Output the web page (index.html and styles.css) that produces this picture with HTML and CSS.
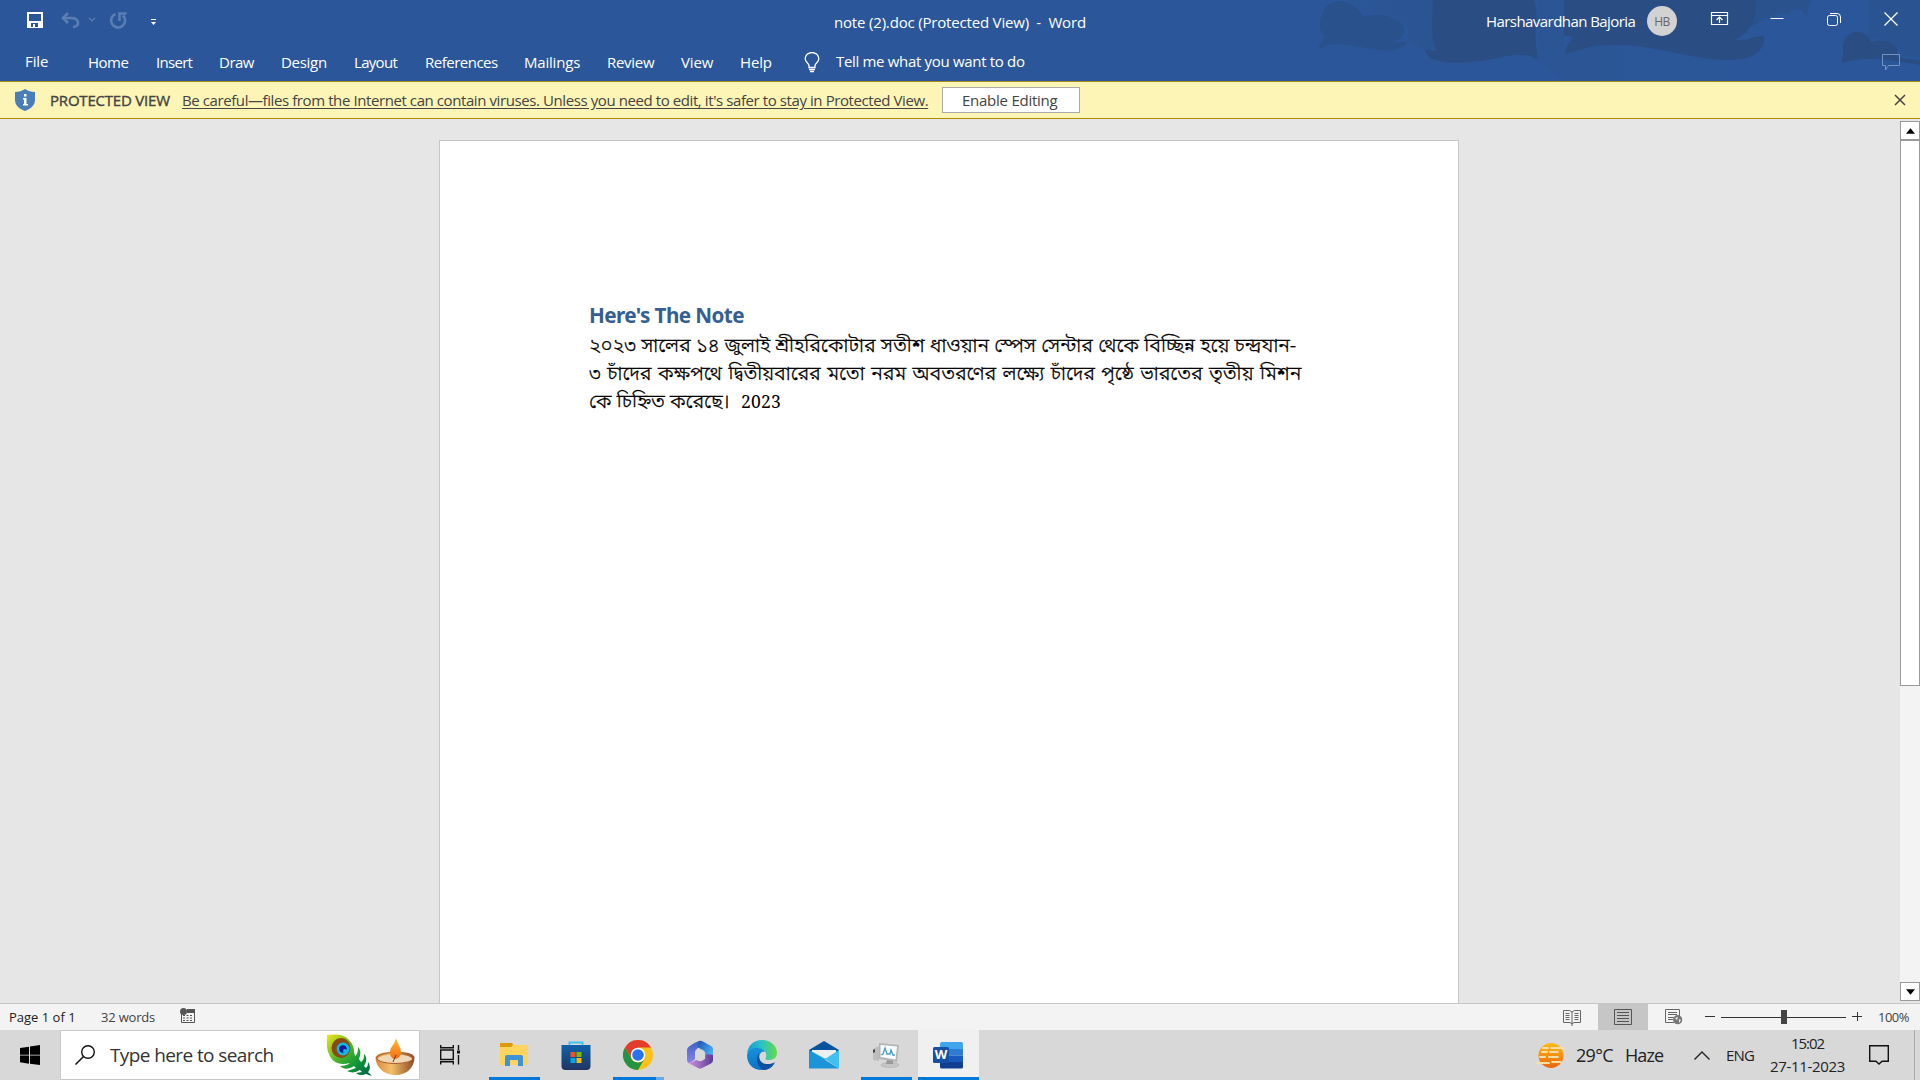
FILE: index.html
```html
<!DOCTYPE html>
<html lang="en">
<head>
<meta charset="utf-8">
<title>note (2).doc - Word</title>
<link rel="stylesheet" href="styles.css">
</head>
<body>
<header class="ribbon">
  <svg class="art" viewBox="1300 0 620 81">
    <defs>
      <linearGradient id="a1"><stop stop-color="#2a4e84" stop-opacity=".75"/><stop offset="1" stop-color="#2a4e84" stop-opacity=".3"/></linearGradient>
      <linearGradient id="a2"><stop stop-color="#2a4e84" stop-opacity=".2"/><stop offset="1" stop-color="#2a4e84" stop-opacity=".9"/></linearGradient>
    </defs>
    <path fill="url(#a2)" opacity=".45" d="M1345 0h95v50l-20-2-12-8c2-12-2-24-24-26-12 2-24-6-39-14z"/>
    <g fill="#2a4e84">
      <path opacity=".7" d="M1320 26c0-14 8-25 18-25 14 0 20 8 26 16 16-5 34 0 39 9 3 6 0 13-10 16 6 2 11-2 14 0-2 7-13 9-28 8-20-2-44-11-60-1 0-6 4-9 6-12-3-3-5-7-5-11z"/>
      <path d="M1433 0h101c6 12 0 30 2 45l2 15c-18-12-40 0-58 1-22 3-52 4-55-11 4-2 8 2 12 0-8-16-4-34-4-50z"/>
      <path d="M1564 0h191c3 18-6 34-20 40 12 2 22-6 29-4 3 11-9 22-23 23-27 4-56-5-86-10-34-6-62-6-90 6 0-7 2-9 6-15 3-3-2-4-7-5z"/>
      <path opacity=".6" d="M1755 0h56c-3 7-4 13-4 18-4-10-14-12-19-4-12-3-25 5-39 14 4-9 6-18 6-28z"/>
      <path d="M1844 54c-4-12 3-22 13-22 8 0 12 5 14 10 14-4 25 1 27 9-3 4 4 8 10 8l12 1v5c-26-4-52-10-78-2 0-5 1-7 2-9z"/>
      <path opacity=".4" d="M1868 0h52v58l-18-2c-2-14-16-16-34-18 2-14 4-26 0-38z"/>
    </g>
    <path fill="url(#a1)" opacity=".3" d="M1538 0h26v55c26-10 60-12 92-4l66 10v20h-160l-24-22z"/>
  </svg>
  <div class="titlebar">
    <svg class="quick" viewBox="0 0 170 41">
      <path fill="#fff" fill-rule="evenodd" d="M27 12h16v16H27zM29 14v7h12v-7zM31 23v4h2v-3h2v3h3v-4z"/>
      <g fill="none" stroke="#5b7eb5" stroke-width="2.6"><path d="M68 13l-5 5 5 5M63 18h8c9 0 9 9 2 9"/><path d="M115.500 14a7 7 0 1 0 7.500 1.500M119.500 21v-7.500h7" /><path stroke-width="1.2" d="M89 18l3 3 3-3"/></g>
      <path fill="#fff" d="M151 19h5v1h-5zM151 22h5l-2.5 3z"/>
    </svg>
    <div class="title">note (2).doc (Protected View)&nbsp; -&nbsp; Word</div>
    <div class="user">Harshavardhan Bajoria</div>
    <div class="avatar">HB</div>
    <svg class="wincontrols" viewBox="1690 0 230 41" fill="none" stroke="#fff">
      <path d="M1711.500 12.500h16v12h-16zM1711.500 15.500h16M1719.500 23v-6M1716.500 20l3-3 3 3" stroke-width="1.2"/>
      <path d="M1770.500 18.500h13"/>
      <rect x="1827.500" y="15.500" width="10" height="10" rx="2"/><path d="M1830 13.500h7q3.500 0 3.500 3.500v6"/>
      <path stroke-width="1.300" d="M1884.500 12.500l13 13M1897.500 12.500l-13 13"/>
    </svg>
  </div>
  <nav class="tabs">
    <span class="file">File</span><span>Home</span><span class="tight">Insert</span><span>Draw</span><span>Design</span><span class="tight">Layout</span><span>References</span><span>Mailings</span><span>Review</span><span class="loose">View</span><span class="loose">Help</span>
    <svg class="bulb" viewBox="0 0 16 21" fill="none" stroke="#fff" stroke-width="1.300"><path d="M5 15.500v-2C4.500 11 1.200 10 1.200 6.800a6.800 6.300 0 0 1 13.600 0C14.800 10 11.500 11 11 13.500v2zM5 17.500h6M6 19.500h4"/></svg>
    <span class="tell">Tell me what you want to do</span>
    <svg class="comment" viewBox="0 0 20 18"><path fill="none" stroke="#7592c0" d="M1.500.5h17v11h-11l-3 4.500v-4.500h-3z"/></svg>
  </nav>
</header>
<div class="protected">
  <svg class="shield" viewBox="0 0 20 22"><path fill="#4a7ebb" d="M10 0c3 2 6 3 10 3v8c0 6-5 9-10 11C5 20 0 17 0 11V3c4 0 7-1 10-3z"/><path fill="#fff" d="M9 5h2.500v2.500H9zM8 9h3.500v6H13v1.500H8V15h1v-4.500H8z"/></svg>
  <span class="pv">PROTECTED VIEW</span>
  <span class="warn">Be careful—files from the Internet can contain viruses. Unless you need to edit, it's safer to stay in Protected View.</span>
  <span class="enable">Enable Editing</span>
  <svg class="dismiss" viewBox="0 0 12 12"><path stroke="#444" stroke-width="1.500" d="M1 1l10 10M11 1L1 11"/></svg>
</div>
<main class="workspace">
  <article class="page">
    <h1>Here's The Note</h1>
    <p class="l1">২০২৩ সালের ১৪ জুলাই শ্রীহরিকোটার সতীশ ধাওয়ান স্পেস সেন্টার থেকে বিচ্ছিন্ন হয়ে চন্দ্রযান-</p>
    <p class="l2">৩ চাঁদের কক্ষপথে দ্বিতীয়বারের মতো নরম অবতরণের লক্ষ্যে চাঁদের পৃষ্ঠে ভারতের তৃতীয় মিশন</p>
    <p class="l3"><span>কে চিহ্নিত করেছে।</span><span class="year">2023</span></p>
  </article>
  <div class="scroll">
    <div class="btn"><svg viewBox="0 0 8 5"><path d="M4 0l4 5H0z"/></svg></div>
    <div class="thumb"></div>
    <div class="btn end"><svg viewBox="0 0 8 5"><path d="M4 5l4-5H0z"/></svg></div>
  </div>
</main>
<footer class="status">
  <span class="pages">Page 1 of 1</span><span class="words">32 words</span>
  <svg class="macro" viewBox="0 0 16 16"><path fill="none" stroke="#555" d="M1.500 5v9.500h13v-13H8"/><path fill="#555" d="M7 1h8v4H7z"/><circle cx="3.500" cy="3.500" r="3.500" fill="#555"/><path stroke="#555" stroke-dasharray="2 1.500" d="M3 7.500h10M3 10h10M3 12.500h10"/></svg>
  <svg class="view read" viewBox="0 0 18 17" fill="none" stroke="#666"><path d="M.5 1.500h6L9 3l2.500-1.500h6v12H11L9 15l-2-1.500H.5zM9 3v14M2.500 4.500h4M2.500 6.500h4M2.500 8.500h4M2.500 10.500h4M11.500 4.500h4M11.500 6.500h4M11.500 8.500h4M11.500 10.500h4"/></svg>
  <div class="view print"><svg viewBox="0 0 18 17" fill="none" stroke="#555"><path d="M.5.500h17v15H.500zM3 3.500h12M3 6.500h12M3 9.500h12M3 12.500h12"/></svg></div>
  <svg class="view web" viewBox="0 0 18 17"><path fill="none" stroke="#666" d="M9 13.500H.5V.500h14V7M3 3.500h9M3 5.500h9M3 8.500h6M3 10.500h5"/><circle cx="12.700" cy="10.700" r="4.600" fill="#777"/><path fill="#eee" d="M10 9l3-1-1 3zM14 10l2 1-2 3z"/></svg>
  <svg class="zoom" viewBox="0 0 160 26"><path fill="none" stroke="#333" d="M3 12.500h10M19 13.500h125M150 12.500h10M155.500 8v9"/><path fill="#444" d="M79 6h6v14h-6z"/></svg>
  <span class="pct">100%</span>
</footer>
<div class="taskbar">
  <div class="start"><svg viewBox="0 0 20 20"><path d="M0 3l9-1.300v8H0zM10 1.500L20 0v9.700H10zM0 10.500h9v8.200L0 17.300zM10 10.500h10V20l-10-1.300z"/></svg></div>
  <div class="search">
    <svg class="glass" viewBox="0 0 20 20"><circle cx="13" cy="7" r="6.300" fill="none" stroke="#111" stroke-width="1.400"/><path stroke="#111" stroke-width="1.500" d="M8.500 11.500L.5 19.500"/></svg>
    <span>Type here to search</span>
    <svg class="diwali" viewBox="326 1032 90 44">
      <defs>
        <linearGradient id="f" x2="1" y2="1"><stop stop-color="#f2e51a"/><stop offset=".4" stop-color="#4fb52a"/><stop offset=".7" stop-color="#0b9438"/><stop offset="1" stop-color="#075a50"/></linearGradient>
        <linearGradient id="b" x2="1"><stop stop-color="#d98940"/><stop offset=".4" stop-color="#f3c06a"/><stop offset="1" stop-color="#8f4a26"/></linearGradient>
        <linearGradient id="fl" x2="0" y2="1"><stop stop-color="#ffc13d"/><stop offset="1" stop-color="#f56a10"/></linearGradient>
      </defs>
      <path fill="url(#f)" d="M327 1034c9-1 17-1 22 5 4 4 5 8 5 12l1 4c3-2 3-6 3-9 4 4 2 9 1 12l2 3c3-2 3-5 3-8 4 4 2 9 0 12l2 2c2-2 2-4 2-6 3 4 2 8 0 10l4 4-6-2c-3 1-7 2-10-1l6-1-2-2c-5 3-9 3-13 1l9-3-2-2c-6 4-11 3-14 0 4 0 8-1 10-3-11 3-18-1-21-9-3-6-2-13-2-19z"/>
      <ellipse cx="341" cy="1047" rx="9.500" ry="10" fill="#8a4a17"/><circle cx="343" cy="1048" r="6.400" fill="#12b9e0"/><circle cx="343" cy="1048" r="3.800" fill="#0d1b9c"/><circle cx="345" cy="1050" r="2" fill="#12b9e0"/>
      <path fill="url(#b)" d="M375.500 1056c3-4 8-5 20-5s17 1 19 5c0 10-7 18-19 18s-20-8-20-18z"/>
      <ellipse cx="395" cy="1058" rx="17" ry="4.500" fill="#f0d8b4"/><ellipse cx="395" cy="1057" rx="18.500" ry="5.500" fill="none" stroke="#a95c2b"/>
      <path fill="url(#fl)" d="M396 1037c1 5 5 9 5 14 0 4-3 7-6 7s-5-3-5-7c0-5 5-8 6-14z"/><path stroke="#6b3a1e" d="M396 1054l-3 7"/>
    </svg>
  </div>
  <div class="app task"><svg viewBox="0 0 20 20" fill="none" stroke="#111" stroke-width="1.400"><path d="M.7 0v2.700h12.600V0M.7 19.500v-2.800h12.600v2.800M.7 5h12.600v9.500H.7zM18.500 0v5M18.500 10v9.500"/><path fill="#111" stroke="none" d="M17 5.500h3v3h-3z"/></svg></div>
  <div class="app on"><svg viewBox="0 0 30 30"><path fill="#dc9a0b" d="M1 3h12l1 3-2 4H1z"/><rect x="1" y="5" width="28" height="20" rx="1" fill="#ffd45e"/><path fill="#dc9a0b" d="M1 3h12l1 2-2 2H1z"/><path fill="#3e93d6" d="M6 26V17q0-2 2-2h14q2 0 2 2v9h-5v-6h-8v6z"/></svg></div>
  <div class="app"><svg viewBox="0 0 30 30"><defs><linearGradient id="s" x2="0" y2="1"><stop stop-color="#0f62ab"/><stop offset="1" stop-color="#203561"/></linearGradient></defs><path fill="none" stroke="#3bc3ee" stroke-width="1.800" d="M8.500 7V2.500h13V7"/><path fill="url(#s)" d="M.5 5h29v21q0 4-4 4h-21q-4 0-4-4z"/><path fill="#f25022" d="M9.500 12h5v5h-5z"/><path fill="#7fba00" d="M15.500 12h5v5h-5z"/><path fill="#00a4ef" d="M9.500 18h5v5h-5z"/><path fill="#ffb900" d="M15.500 18h5v5h-5z"/></svg></div>
  <div class="app on more"><svg viewBox="0 0 30 30"><circle cx="15" cy="15" r="15" fill="#fbc116"/><path fill="#e33b2e" d="M2 7.500A15 15 0 0 1 28 7.500H15L8.500 18.700z"/><path fill="#229342" d="M2 7.500l6.500 11.200a7.500 7.500 0 0 0 13 0L15 30A15 15 0 0 1 2 7.500z"/><circle cx="15" cy="15" r="7.300" fill="#fff"/><circle cx="15" cy="15" r="5.800" fill="#2a74eb"/></svg></div>
  <div class="app"><svg viewBox="0 0 30 30"><defs><linearGradient id="m1" x2="0" y2="1"><stop stop-color="#3a62c0"/><stop offset="1" stop-color="#8a83f0"/></linearGradient><linearGradient id="m2" x2="1" y2="1"><stop stop-color="#1c4fa8"/><stop offset=".5" stop-color="#3a8fe0"/><stop offset="1" stop-color="#5fd0f8"/></linearGradient><linearGradient id="m3" x2="1"><stop stop-color="#cf96e2"/><stop offset="1" stop-color="#5d3b96"/></linearGradient></defs><path fill="url(#m1)" d="M14 1Q8 3 4 6.500 2 8 2 10v10q0 2 1.500 3 4-1 6.500-4v-7q0-2 2-3l5-7z"/><path fill="url(#m2)" d="M14 1q2-.5 4 .5L26 6q2 1 2 3v13q-6-1-8-4v-5q0-2-1.500-2.500L12 7z"/><path fill="url(#m3)" d="M28 15v5q0 2-2 3.500L17 28q-2 1-4 0L3 23q5-1 8-3l3 1q2 .5 3.500-.5L20 19q0-3 2-5z"/><path fill="#d8d8d8" d="M15 10l4.500 2.500v5.500L15 20.500 10.500 18v-5.500z"/></svg></div>
  <div class="app"><svg viewBox="0 0 30 30"><defs><linearGradient id="e1" x2="1"><stop stop-color="#169bd9"/><stop offset=".5" stop-color="#2cc3c2"/><stop offset="1" stop-color="#66db48"/></linearGradient><linearGradient id="e2" x2="0" y2="1"><stop stop-color="#1493d8"/><stop offset="1" stop-color="#0c70c8"/></linearGradient></defs><path fill="url(#e1)" d="M0 14C1 5 7 0 15 0c9 0 15 6 15 13 0 5-4 7-8 7-4 0-4-1-3-3 1-4-1-7-5-8C8 7 2 9 0 14z"/><path fill="url(#e2)" d="M0 15c1-5 6-8 11-7 3 0 6 2 7 4-4-1-7 3-5 8 2 6 8 6 10 5l4-1c-3 4-7 6-12 6C6 30 0 24 0 15z"/><path fill="#11509d" d="M12 13c-4 7-2 14 5 17 4 0 9-3 11-8-6 4-15 2-16-4z"/></svg></div>
  <div class="app"><svg viewBox="0 0 30 30"><path fill="#08539e" d="M0 10L15 1l15 9v4H0z"/><path fill="#eee" d="M3 10h24v8H3z"/><path fill="#34b9ef" d="M0 10l30 16V10L15 21z"/><path fill="#1c94da" d="M0 10l30 18.500H0z"/><path fill="#3fc0f1" d="M30 10L16 19l14 9.500z"/></svg></div>
  <div class="app on"><svg viewBox="0 0 30 30"><path fill="#bdbdbd" d="M2 9l6-3v15l-6-1z"/><path fill="#444" d="M2 10l2-1v3l-2 1z"/><path fill="#b5b5b5" d="M8 3l20 2-2 17-18-3z"/><path fill="#f7fcff" d="M9.500 5L26 6.500l-1.500 13L9.500 17z"/><path fill="none" stroke="#4a9acb" stroke-width="1.300" d="M10 15l2-1 2-6 2 6 3 0 1-4 2 5h2"/><ellipse cx="19" cy="25" rx="9" ry="2.500" fill="#c6c6c6" stroke="#aaa" stroke-width=".6"/><path fill="#999" d="M16 20l6 1v3h-7z"/></svg></div>
  <div class="app on active"><svg viewBox="0 0 30 30"><path fill="#41a5ee" d="M9 2h19.500q1.500 0 1.500 1.500V9H7V4q0-2 2-2z"/><path fill="#2b7cd3" d="M7 9h23v6.500H7z"/><path fill="#185abd" d="M7 15.500h23V22H7z"/><path fill="#103f91" d="M7 22h23v5q0 1.500-1.500 1.500H9Q7 28.500 7 27z"/><rect y="7" width="16" height="16" rx="1.500" fill="#174ea6"/><text x="8" y="19.200" text-anchor="middle" class="w">W</text></svg></div>
  <svg class="weather" viewBox="0 0 30 27"><defs><linearGradient id="h" x2="0" y2="1"><stop stop-color="#fdbb16"/><stop offset="1" stop-color="#ea6410"/></linearGradient></defs><circle cx="15" cy="13.500" r="12.500" fill="url(#h)"/><path fill="none" stroke="#f8dfa4" stroke-width="1.800" stroke-linecap="round" d="M7 6h5m3 0h13M6 10h5m3 0h8M4 15h5m4 0h9M1 21h12m3-1h9"/></svg>
  <span class="temp">29°C</span><span class="haze">Haze</span>
  <svg class="chev" viewBox="0 0 16 9"><path d="M.5 8.500L8 1l7.500 7.500" fill="none" stroke="#222" stroke-width="1.400"/></svg>
  <span class="lang">ENG</span>
  <div class="clock"><span class="time">15:02</span><span>27-11-2023</span></div>
  <svg class="notif" viewBox="0 0 20 20"><path fill="none" stroke="#111" stroke-width="1.400" d="M.7.700h18.600v15.600H13L10 19l-3-2.700H.7z"/></svg>
  <i class="peek"></i>
</div>
</body>
</html>
```
FILE: styles.css
```css
* { box-sizing: border-box; }
body { margin: 0; width: 1920px; height: 1080px; overflow: hidden; display: flex; flex-direction: column; font: 15px/20px "Open Sans", "Noto Sans", sans-serif; color: #222; }
span, .title, .user { white-space: nowrap; }
svg { display: block; flex: none; }

.ribbon { height: 82px; background: #2b579a; color: #fff; position: relative; border-bottom: 1px solid #a98a1c; flex: none; }
.art { position: absolute; left: 1300px; top: 0; width: 620px; height: 81px; }
.titlebar { height: 41px; display: flex; position: relative; }
.quick { width: 170px; height: 41px; margin-right: 664px; }
.title { width: 652px; padding-top: 12px; letter-spacing: -.18px; }
.user { width: 161px; padding-top: 11px; letter-spacing: -.56px; }
.avatar { width: 30px; height: 30px; margin: 6px 13px 0 0; border-radius: 50%; background: #d2d2d2; color: #666; font-size: 12px; line-height: 31px; text-align: center; letter-spacing: -.5px; }
.wincontrols { width: 230px; height: 41px; }
.tabs { display: flex; position: relative; padding: 11px 0 0 25px; letter-spacing: -.5px; gap: 27px; height: 40px; }
.tabs span { flex: none; width: 41px; }
.tabs .file { width: 36px; margin-top: -1px; letter-spacing: -.1px; }
.tabs span:nth-child(3) { width: 36px; }
.tabs span:nth-child(4) { width: 35px; }
.tabs span:nth-child(5) { width: 46px; letter-spacing: -.3px; }
.tabs span:nth-child(6) { width: 44px; }
.tabs span:nth-child(7) { width: 72px; }
.tabs span:nth-child(8) { width: 56px; letter-spacing: -.2px; }
.tabs span:nth-child(9) { width: 47px; letter-spacing: -.3px; }
.tabs .tight { letter-spacing: -.7px; }
.tabs .loose { width: 32px; letter-spacing: -.15px; }
.bulb { width: 16px; height: 21px; margin: 0 -11px 0 5px; }
.tabs .tell { width: 189px; letter-spacing: -.32px; margin-top: -1px; }
.comment { width: 20px; height: 18px; margin: 2px 0 0 829px; }

.protected { height: 37px; flex: none; display: flex; align-items: center; background: #fcf5b5; border-bottom: 1px solid #b08a00; color: #444; padding: 0 14px 0 15px; }
.shield { width: 20px; height: 22px; margin-right: 15px; }
.pv { width: 132px; letter-spacing: -.2px; -webkit-text-stroke: .4px #444; }
.warn { width: 760px; letter-spacing: -.41px; text-decoration: underline; text-underline-offset: 2px; }
.enable { width: 138px; height: 26px; border: 1px solid #aaa; background: #fff; padding-left: 19px; line-height: 24px; letter-spacing: -.25px; }
.dismiss { width: 12px; height: 12px; margin-left: auto; }

.workspace { flex: 1; min-height: 0; background: #e6e6e6; display: flex; padding-left: 439px; }
.page { width: 1020px; margin-top: 21px; background: #fff; border: 1px solid #c6c6c6; border-bottom: 0; padding: 160px 0 0 149px; color: #000; }
.page h1 { margin: 0; font: 700 20.7px/29px "Noto Sans", sans-serif; letter-spacing: -.6px; color: #365f91; }
.page p { margin: 0; height: 28px; font: 300 19.8px/28px "Noto Sans Bengali", "Noto Sans", sans-serif; -webkit-text-stroke: .3px #000; white-space: nowrap; position: relative; top: 3px; }
.page .l1 { word-spacing: .2px; }
.page .l2 { word-spacing: 1.4px; }
.page p.l3 { display: flex; align-items: baseline; }
.l3 span:first-child { width: 152px; }
.year { font: 17.5px "Noto Serif", serif; letter-spacing: .2px; -webkit-text-stroke: 0; }
.scroll { width: 20px; margin: 2px 0 2px 441px; display: flex; flex-direction: column; background: #f3f3f3; }
.btn { height: 19px; border: 1px solid #999; background: #fff; display: flex; align-items: center; justify-content: center; }
.btn svg { width: 9px; height: 6px; }
.btn.end { margin-top: auto; }
.thumb { height: 546px; border: 1px solid #999; background: #fff; }

.status { height: 27px; flex: none; background: #f3f3f3; border-top: 1px solid #c6c6c6; display: flex; align-items: center; font-size: 13px; padding-left: 9px; }
.pages { width: 92px; } .words { width: 79px; letter-spacing: -.2px; color: #444; }
.macro { width: 16px; height: 16px; margin: -2px 1367px 0 0; }
.view { width: 18px; height: 17px; }
.status .read { margin-right: 17px; }
.view.print { width: 50px; height: 26px; background: #c6c6c6; padding: 5px 16px; margin-right: 17px; }
.print svg { width: 18px; height: 17px; }
.zoom { width: 160px; height: 26px; margin: 0 16px 0 19px; }
.pct { letter-spacing: -.5px; color: #444; }

.taskbar { height: 50px; flex: none; background: #d8d8d8; display: flex; }
.start { width: 60px; padding: 15px 20px; } .start svg { width: 20px; height: 20px; }
.search { width: 360px; height: 50px; background: #fff; border: 1px solid #c9c9c9; display: flex; align-items: center; padding-left: 14px; font-size: 19px; letter-spacing: -.6px; color: #333; }
.glass { width: 20px; height: 20px; margin-right: 15px; }
.search span { width: 216px; }
.diwali { width: 90px; height: 44px; }
.app { width: 51px; height: 50px; margin-right: 11px; display: flex; justify-content: center; align-items: center; }
.app svg { width: 30px; height: 30px; margin-right: 2px; }
.app.task { width: 60px; margin-right: 9px; } .task svg { width: 20px; height: 20px; margin: 0; }
.app.on { border-bottom: 3px solid #0078d7; padding-top: 3px; }
.app.more { border-image: linear-gradient(90deg, #0078d7 41px, #67abe4 41px) 3; border-width: 0 0 3px; }
.app.active { width: 61px; background: #f0f0f0; margin: 0 557px 0 -5px; }
.w { font: bold 13px "Open Sans", sans-serif; fill: #fff; }
.weather { width: 30px; height: 27px; margin: 12px 10px 0 0; }
.temp, .haze { font-size: 18px; line-height: 20px; margin-top: 15px; letter-spacing: -.7px; }
.temp { width: 49px; } .haze { width: 69px; letter-spacing: -.9px; }
.chev { width: 16px; height: 9px; margin: 21px 16px 0 0; }
.lang { width: 44px; margin-top: 15px; letter-spacing: -.8px; }
.clock { width: 75px; display: flex; flex-direction: column; align-items: center; line-height: 23px; padding-top: 2px; margin-right: 24px; letter-spacing: -.35px; }
.time { letter-spacing: -1px; }
.notif { width: 20px; height: 20px; margin-top: 15px; }
.peek { width: 1px; height: 50px; background: #aaa; margin-left: 25px; }
```
